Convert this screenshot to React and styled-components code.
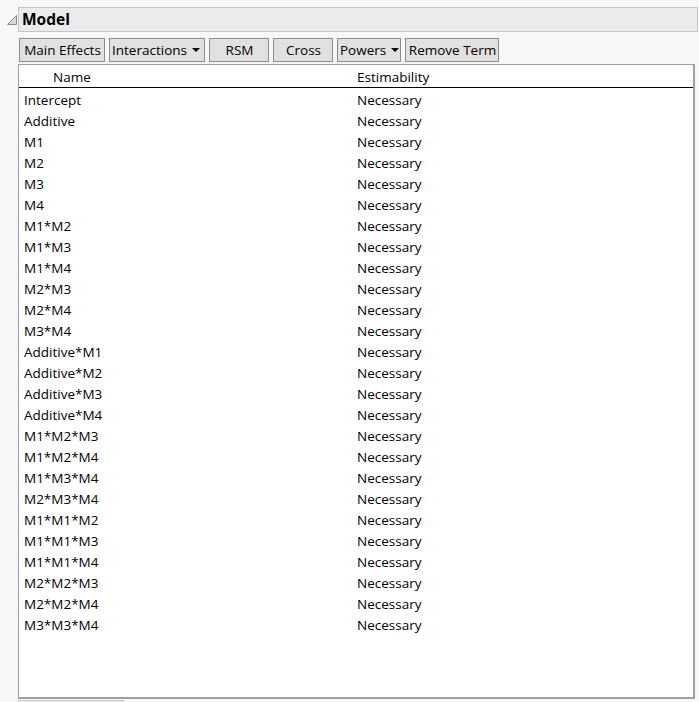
import React from 'react';
import styled, { createGlobalStyle } from 'styled-components';

const terms = [
  'Intercept', 'Additive', 'M1', 'M2', 'M3', 'M4',
  'M1*M2', 'M1*M3', 'M1*M4', 'M2*M3', 'M2*M4', 'M3*M4',
  'Additive*M1', 'Additive*M2', 'Additive*M3', 'Additive*M4',
  'M1*M2*M3', 'M1*M2*M4', 'M1*M3*M4', 'M2*M3*M4',
  'M1*M1*M2', 'M1*M1*M3', 'M1*M1*M4', 'M2*M2*M3', 'M2*M2*M4', 'M3*M3*M4',
];

const buttons = [
  { label: 'Main Effects', width: 86 },
  { label: 'Interactions', width: 96, menu: true },
  { label: 'RSM', width: 60 },
  { label: 'Cross', width: 60 },
  { label: 'Powers', width: 64, menu: true },
  { label: 'Remove Term', width: 94 },
];

const GlobalStyle = createGlobalStyle`
  html, body {
    margin: 0;
    padding: 0;
    background: #f7f7f7;
  }
  body {
    font-family: "Open Sans", "Liberation Sans", Arial, sans-serif;
    font-size: 13.5px;
    color: #000;
  }
`;

const App = () => (
  <>
    <GlobalStyle />
    <Page>
      <Outline>
        <Disclosure width="10" height="10" viewBox="0 0 10 10">
          <path d="M0.5 9.5 L9.5 9.5 L9.5 0.5 Z" fill="#d9d9d9" stroke="#8a8a8a" strokeWidth="1" />
        </Disclosure>
        <TitleBar>Model</TitleBar>
      </Outline>
      <Body>
        <Toolbar>
          {buttons.map(b => (
            <Button key={b.label} width={b.width} menu={b.menu}>
              {b.label}
              {b.menu && <Caret />}
            </Button>
          ))}
        </Toolbar>
        <Table>
          <HeaderRow>
            <HeadName>Name</HeadName>
            <HeadCell>Estimability</HeadCell>
          </HeaderRow>
          {terms.map(t => (
            <Row key={t}>
              <Cell>{t}</Cell>
              <Cell>Necessary</Cell>
            </Row>
          ))}
        </Table>
        <Footer />
      </Body>
    </Page>
  </>
);

const Page = styled.div`
  padding: 7px 0 0 7px;
  width: 692px;
  height: 695px;
  overflow: hidden;
`;

const Outline = styled.div`
  display: flex;
  align-items: flex-end;
`;

const Disclosure = styled.svg`
  display: block;
  margin: 0 1px 7px 0;
  flex: none;
`;

const TitleBar = styled.div`
  flex: 1;
  height: 25px;
  margin-right: 1px;
  box-sizing: border-box;
  background: #ebebeb;
  border: 1px solid #c4c4c4;
  padding-left: 3px;
  font-weight: bold;
  font-size: 15.5px;
  line-height: 22px;
`;

const Body = styled.div`
  padding-left: 11px;
`;

const Toolbar = styled.div`
  display: flex;
  gap: 4px;
  padding: 6px 0 2px 1px;
`;

const Button = styled.div`
  box-sizing: border-box;
  width: ${p => p.width}px;
  height: 24px;
  display: flex;
  align-items: center;
  justify-content: ${p => (p.menu ? 'flex-start' : 'center')};
  padding: 0 1px 0 2px;
  gap: 5px;
  background: #e1e1e1;
  border: 1px solid #8c8c8c;
  line-height: 22px;
  white-space: nowrap;
  overflow: hidden;
`;

const Caret = styled.span`
  flex: none;
  width: 0;
  height: 0;
  border-left: 4px solid transparent;
  border-right: 4px solid transparent;
  border-top: 4px solid #000;
`;

const Table = styled.div`
  box-sizing: border-box;
  width: 677px;
  height: 635px;
  background: #fff;
  border: 1px solid #a0a0a0;
  border-right-width: 2px;
  border-bottom-width: 2px;
`;

const HeaderRow = styled.div`
  display: grid;
  grid-template-columns: 333px 1fr;
  height: 22px;
  margin-bottom: 2px;
  border-bottom: 1px solid #000;
  line-height: 24px;
`;

const HeadName = styled.div`
  padding-left: 34px;
`;

const HeadCell = styled.div`
  padding-left: 5px;
`;

const Row = styled.div`
  display: grid;
  grid-template-columns: 333px 1fr;
  height: 21px;
  line-height: 21px;
`;

const Cell = styled.div`
  padding-left: 5px;
  white-space: nowrap;
`;

const Footer = styled.div`
  width: 106px;
  height: 6px;
  margin-top: 1px;
  box-sizing: border-box;
  border: 1px solid #c8c8c8;
  background: #f0f0f0;
`;

export default App;
